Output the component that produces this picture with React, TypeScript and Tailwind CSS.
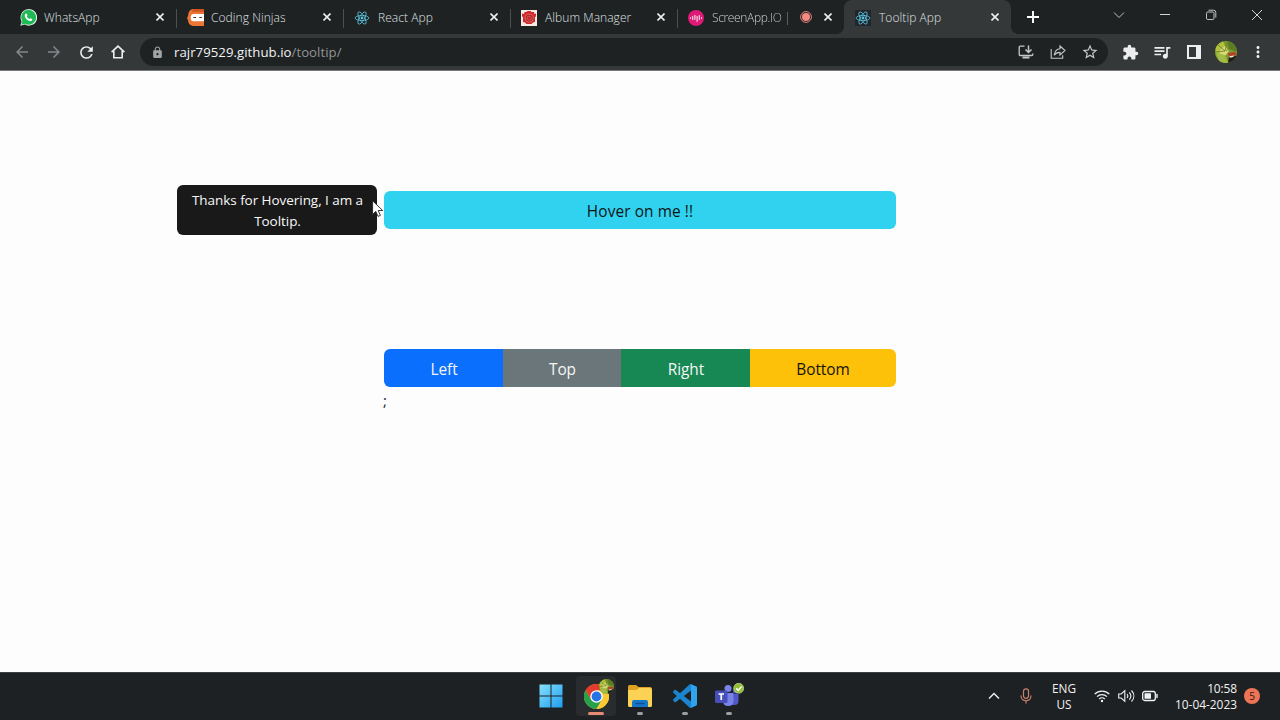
import React from 'react';
import clsx from 'clsx';
import {
  MdArrowBack,
  MdArrowForward,
  MdExtension,
  MdLock,
  MdMoreVert,
  MdQueueMusic,
  MdRefresh,
  MdStarBorder,
} from 'react-icons/md';

/* ---------- favicons ---------- */

function WhatsAppIcon() {
  return (
    <svg viewBox="0 0 16 16" className="h-[17px] w-[17px]">
      <path d="M.3 15.8l1.2-4.1A7.8 7.8 0 1 1 4.5 14.7z" fill="#e9f7ec" />
      <path d="M1.2 14.9l1-3.4A7 7 0 1 1 4.7 13.9z" fill="#1fb955" />
      <path
        d="M5.7 4.3c.3-.1.6 0 .7.3l.6 1.3c.1.3-.5.9-.6 1.1.5 1.1 1.4 1.9 2.6 2.4.3-.2.7-.9 1-.8l1.4.7c.3.2.1 1.5-.6 1.8-2.2 1.2-6.7-2.3-6.3-5.3.1-.7.6-1.4 1.2-1.5z"
        fill="#fff"
      />
    </svg>
  );
}

function NinjasIcon() {
  return (
    <svg viewBox="0 0 16 16" className="h-[17px] w-[17px]">
      <path d="M5.500 0H16v16H5.500Q1 15 1 10.500L0 8.500 1 6.500Q1 1 5.500 0z" fill="#ec7434" />
      <path d="M6 0h10v2.500H4.500z" fill="#cf5520" />
      <path d="M6 4.800h10v6.700H6q-2.500 0-2.500-3.300T6 4.800z" fill="#fff" />
      <path d="M6 8h2.500M11.500 8H14" stroke="#333" strokeWidth="1.100" />
    </svg>
  );
}

function ReactIcon({ dark }: { dark?: boolean }) {
  return (
    <svg viewBox="0 0 16 16" className="h-4 w-4">
      {dark && <rect width="16" height="16" fill="#20262b" />}
      <g fill="none" stroke="#5cc4dc" strokeWidth=".8">
        <ellipse cx="8" cy="8" rx="6.900" ry="2.600" />
        <ellipse cx="8" cy="8" rx="6.900" ry="2.600" transform="rotate(60 8 8)" />
        <ellipse cx="8" cy="8" rx="6.900" ry="2.600" transform="rotate(120 8 8)" />
      </g>
      <circle cx="8" cy="8" r="1.400" fill="#5cc4dc" />
    </svg>
  );
}

function AlbumIcon() {
  return (
    <svg viewBox="0 0 16 16" className="h-4 w-4">
      <rect width="16" height="16" fill="#f6e9e6" />
      <path d="M1 3.500l2 .5.500-2h2l1-1h3l1 1H13l.3 2 1.700-.5v3l-1 .5v5l-2 .5-1.500 1.500h-5L4 12.500l-2-.5V7L1 6.500z" fill="#cf2a2c" />
      <circle cx="8.200" cy="8.200" r="4" fill="#b3181d" stroke="#e99a96" strokeWidth=".6" />
      <circle cx="8.200" cy="8.200" r="2.200" fill="#c9282b" stroke="#e28a87" strokeWidth=".5" />
    </svg>
  );
}

function ScreenAppIcon() {
  return (
    <svg viewBox="0 0 16 16" className="h-4 w-4">
      <circle cx="8" cy="8" r="8" fill="#dd1a75" />
      <path
        d="M2.500 7.700v.6M4.700 6.500v3M6.900 5.300v4M9.100 6.300v5M11.300 5.500v4M13.500 7.700v.6"
        stroke="#fbd3e5"
        strokeWidth="1.200"
        strokeLinecap="round"
      />
    </svg>
  );
}

function Cross({ className }: { className?: string }) {
  return (
    <svg viewBox="0 0 8 8" className={clsx('h-2 w-2 shrink-0', className)}>
      <path d="M.5.5l7 7M7.500.5l-7 7" stroke="currentColor" strokeWidth="1.600" />
    </svg>
  );
}

/* Round profile picture: foliage with a bit of red and white */
function Avatar({ className }: { className?: string }) {
  return (
    <svg viewBox="0 0 22 22" className={className}>
      <defs>
        <clipPath id="avatar-clip">
          <circle cx="11" cy="11" r="11" />
        </clipPath>
      </defs>
      <g clipPath="url(#avatar-clip)">
        <rect width="22" height="22" fill="#7f9a2c" />
        <path d="M0 5l8-5 3 8-9 8z" fill="#b2c23e" />
        <path d="M12 0l10 3v8l-8-3z" fill="#5c7d24" />
        <path d="M5 9l5-4 4 5-4 5-5-2z" fill="#d9d876" />
        <path d="M2 12l8 2 3 8H4z" fill="#a5bb48" />
        <path d="M14 15h8v7h-9z" fill="#1f1d16" />
        <path d="M13 12l7-1 2 3-8 1.500z" fill="#b5402c" />
        <path d="M14 15.300l5-.8-.5 1.500-3.500.8z" fill="#eee4d2" />
        <path d="M3 4l7 6M12 2l-2 8M1 11l9-1M18 4l-7 6" stroke="#5f7b22" strokeWidth=".8" />
      </g>
    </svg>
  );
}

/* ---------- browser chrome ---------- */

const tabs = [
  { title: 'WhatsApp', icon: <WhatsAppIcon /> },
  { title: 'Coding Ninjas', icon: <NinjasIcon /> },
  { title: 'React App', icon: <ReactIcon /> },
  { title: 'Album Manager', icon: <AlbumIcon /> },
  { title: 'ScreenApp.IO |', icon: <ScreenAppIcon />, recording: true },
  { title: 'Tooltip App', icon: <ReactIcon dark />, active: true },
];

function TabStrip() {
  return (
    <div className="flex h-[34px] bg-[#1f2223] pl-[9px]">
      {tabs.map((tab, i) => (
        <div
          key={tab.title}
          className={clsx(
            'relative flex w-[167px] shrink-0 items-center pr-3 pl-[11px]',
            tab.active && 'rounded-t-lg bg-[#353839]'
          )}
        >
          <span className="flex w-[17px] shrink-0 pt-px">{tab.icon}</span>
          <span
            className={clsx(
              'ml-[7px] flex-1 pt-px text-[12px] font-light whitespace-nowrap text-[#dfe1e2]',
              tab.recording
                ? 'bg-[linear-gradient(90deg,#dfe1e2_70%,#85888a_100%)] bg-clip-text tracking-[-0.35px] text-transparent'
                : 'tracking-[0.06px]'
            )}
          >
            {tab.title}
          </span>
          {tab.recording && (
            <svg viewBox="0 0 12 12" className="mr-3 ml-2 h-3 w-3 shrink-0">
              <circle cx="6" cy="6" r="5.400" fill="none" stroke="#e8827b" />
              <circle cx="6" cy="6" r="4" fill="#f28b82" />
            </svg>
          )}
          <Cross className="text-[#eceeef]" />
          {i < 4 && <span className="absolute -right-px h-[19px] w-px translate-y-[1px] bg-[#4b4f51]" />}
          {tab.active && (
            <>
              <span className="absolute bottom-0 -left-2 h-2 w-2 bg-[radial-gradient(circle_at_0_0,#1f2223_8px,#353839_8px)]" />
              <span className="absolute -right-2 bottom-0 h-2 w-2 bg-[radial-gradient(circle_at_100%_0,#1f2223_8px,#353839_8px)]" />
            </>
          )}
        </div>
      ))}
      <svg viewBox="0 0 12 12" className="mt-[11px] ml-4 h-3 w-3">
        <path d="M6 0v12M0 6h12" stroke="#fff" strokeWidth="1.900" />
      </svg>
      <div className="ml-auto flex h-[29px] items-center text-[#d3d5d6]">
        <svg viewBox="0 0 12 12" className="mr-[34px] h-3 w-3" fill="none" stroke="currentColor">
          <path d="M1 3.500l5 5 5-5" strokeWidth=".9" />
        </svg>
        <svg viewBox="0 0 12 12" className="mr-[34px] h-3 w-3" fill="none" stroke="currentColor">
          <path d="M1 5.500h10" />
        </svg>
        <svg viewBox="0 0 12 12" className="mr-[34px] h-3 w-3" fill="none" stroke="currentColor" strokeWidth=".9">
          <rect x="1.500" y="3" width="7.500" height="7.500" rx="1.300" />
          <path d="M3.500 1.200h5a2.300 2.300 0 0 1 2.300 2.300V8.500" />
        </svg>
        <svg viewBox="0 0 12 12" className="mr-[17px] h-3 w-3" fill="none" stroke="currentColor">
          <path d="M1 1l10 10M11 1L1 11" />
        </svg>
      </div>
    </div>
  );
}

function Toolbar() {
  return (
    <div className="flex h-[37px] items-center border-b border-[#77797a] bg-[#353839] pl-[13px] text-[#eceeef]">
      <MdArrowBack className="mr-[14px] h-[18px] w-[18px] text-[#85888a]" />
      <MdArrowForward className="mr-[14px] h-[18px] w-[18px] text-[#85888a]" />
      <MdRefresh className="mr-[15px] h-[19px] w-[19px]" />
      <svg viewBox="0 0 14 14" className="mr-[15px] h-[14px] w-[14px]" fill="none" stroke="currentColor" strokeWidth="1.600">
        <path d="M.6 7.200L7 1.200l6.400 6M2.800 5.700v7.100h8.400V5.700" />
      </svg>
      <div className="flex h-7 w-[968px] items-center rounded-full bg-[#1f2223] pr-[9px] pl-[11px] text-[#c5c8ca]">
        <MdLock className="h-[13px] w-[13px] text-[#a2a5a7]" />
        <span className="ml-[10px] pt-px text-[13.2px] tracking-[0.04px] text-[#f1f2f3]">
          rajr79529.github.io<span className="text-[#909496]">/tooltip/</span>
        </span>
        <svg viewBox="0 0 16 16" className="ml-auto h-4 w-4" fill="none" stroke="currentColor" strokeWidth="1.300">
          <path d="M6.500 2.200H2.200Q1.200 2.200 1.200 3.200v7.300q0 1 1 1H13.800q1 0 1-1V9.500" />
          <path d="M4.500 13.500h7" strokeWidth="2" />
          <path d="M10.500 1.500v6.800M7.500 5.500l3 3 3-3" strokeWidth="1.500" />
        </svg>
        <svg viewBox="0 0 16 16" className="ml-4 h-4 w-4" fill="none" stroke="currentColor" strokeWidth="1.100">
          <path d="M1.200 5v9.300h11.500v-3" />
          <path d="M10 2l5 4.500-5 4.500V8.400c-2.800 0-4.500.7-5.800 2.800C4.700 7.500 6.700 5 10 4.700z" />
        </svg>
        <MdStarBorder className="ml-[15px] h-[18px] w-[18px]" />
      </div>
      <MdExtension className="ml-[14px] h-[17px] w-[17px]" />
      <MdQueueMusic className="ml-[13px] h-5 w-5" />
      <svg viewBox="0 0 14 14" className="ml-[15px] h-[14px] w-[14px]" fill="none" stroke="currentColor">
        <path d="M1 1h12v12H1z" strokeWidth="2" />
        <path d="M11 1v12" strokeWidth="4" />
      </svg>
      <Avatar className="ml-[14px] h-[22px] w-[22px]" />
      <MdMoreVert className="ml-3 h-[18px] w-[18px]" />
    </div>
  );
}

/* ---------- page ---------- */

function TooltipPage() {
  return (
    <main className="flex-1 bg-[#fdfdfd] pt-[120px]">
      <div className="mx-auto w-[512px]">
        <div className="relative">
          <button className="flex h-[38px] w-full items-center justify-center rounded-md bg-[#31d2f0] pt-[3px] text-[15.4px] tracking-[0.1px] text-[#101314]">
            Hover on me !!
          </button>
          <div className="absolute -top-1.5 right-[519px] h-[50px] w-[200px] rounded-md bg-[#191919] py-[5px] pr-[7px] pl-2 text-center text-[13.5px] leading-[20.5px] tracking-[-0.05px] text-[#f8f8f8]">
            Thanks for Hovering, I am a Tooltip.
          </div>
        </div>

        <div className="mt-[120px] flex h-[38px] overflow-hidden rounded-md text-[15.4px] tracking-[-0.05px] text-[#f4f6f6]">
          <button className="w-[119px] bg-[#0b6ffd] pt-[3px] pl-px">Left</button>
          <button className="w-[118px] bg-[#6a7679] pt-[3px] pl-px">Top</button>
          <button className="w-[129px] bg-[#178754] pt-[3px] pl-px">Right</button>
          <button className="w-[146px] bg-[#fcc108] pt-[3px] text-[#15130a]">Bottom</button>
        </div>
        <p className="-ml-px pt-px text-[15px] leading-6 text-[#212529]">;</p>
      </div>
    </main>
  );
}

function Cursor() {
  return (
    <svg viewBox="0 0 12 18" className="absolute top-[200px] left-[372px] h-[18px] w-3">
      <path d="M.6.8v13.600l3.200-3 2.200 5 2.400-1-2.200-4.900h4.500z" fill="#fff" stroke="#222" strokeWidth=".9" />
    </svg>
  );
}

/* ---------- taskbar ---------- */

function WindowsLogo() {
  return (
    <svg viewBox="0 0 24 24" className="h-6 w-6">
      <defs>
        <linearGradient id="win" x1="0" y1="0" x2="1" y2="1">
          <stop offset="0" stopColor="#86e0fb" />
          <stop offset="1" stopColor="#1d9df0" />
        </linearGradient>
      </defs>
      <path d="M.5.500h11v11H.5zM12.500.500h11v11h-11zM.5 12.500h11v11H.5zM12.500 12.500h11v11h-11z" fill="url(#win)" />
    </svg>
  );
}

function ChromeLogo() {
  return (
    <span className="relative flex">
      <svg viewBox="0 0 24 24" className="h-[25px] w-[25px]">
        <circle cx="12" cy="12" r="12" fill="#fcc934" />
        <path d="M1.600 6A12 12 0 0 0 12 24l5.200-9L12 12l-5.200 3z" fill="#27a04b" />
        <path d="M22.400 6A12 12 0 0 1 12 24l5.200-9L16 7z" fill="#fcc934" />
        <path d="M12 6h10.400A12 12 0 0 0 1.600 6l5.200 9z" fill="#e33b2e" />
        <circle cx="12" cy="12" r="6" fill="#fff" />
        <circle cx="12" cy="12" r="4.700" fill="#2673e6" />
      </svg>
      <Avatar className="absolute -top-[5px] -right-[5px] h-[15px] w-[15px]" />
    </span>
  );
}

function FolderLogo() {
  return (
    <svg viewBox="0 0 26 24" className="h-6 w-[26px]">
      <path d="M1 2.500Q1 1 2.500 1H9l2.500 2H23q2 0 2 2v6H1z" fill="#e0a021" />
      <path d="M1 6h8.500l2.500-2h11q2 0 2 2v15.500Q25 23 23.500 23h-21Q1 23 1 21.500z" fill="#fcd254" />
      <path d="M5 23v-5q0-2 2-2h12q2 0 2 2v5z" fill="#1676c8" />
      <path d="M9 19.500h8" stroke="#0c4f92" strokeWidth="1.500" strokeLinecap="round" />
    </svg>
  );
}

function VsCodeLogo() {
  return (
    <svg viewBox="0 0 24 24" className="h-6 w-6">
      <path
        d="M23.150 2.587L18.210.210a1.494 1.494 0 0 0-1.705.290l-9.460 8.630-4.120-3.128a.999.999 0 0 0-1.276.057L.327 7.261A1 1 0 0 0 .326 8.740L3.899 12 .326 15.260a1 1 0 0 0 .001 1.479L1.650 17.940a.999.999 0 0 0 1.276.057l4.120-3.128 9.460 8.630a1.492 1.492 0 0 0 1.704.290l4.942-2.377A1.500 1.500 0 0 0 24 20.060V3.939a1.500 1.500 0 0 0-.850-1.352zm-5.146 14.861L10.826 12l7.178-5.448v10.896z"
        fill="#1b86cf"
      />
      <path d="M18 .3l5.150 2.287A1.500 1.500 0 0 1 24 3.939V20.060a1.500 1.500 0 0 1-.85 1.352L18 23.700z" fill="#2ea3ee" />
    </svg>
  );
}

function TeamsLogo() {
  return (
    <svg viewBox="0 0 30 26" className="h-[26px] w-[30px]">
      <circle cx="14" cy="5.500" r="3.500" fill="#7b83eb" />
      <circle cx="21.500" cy="8" r="2.500" fill="#5059c9" />
      <path d="M17 11h7.500v7q0 4-4 4H17z" fill="#5059c9" />
      <path d="M9 10h10.500v8q0 5-5.250 5T9 18z" fill="#7b83eb" />
      <rect x="1" y="7.500" width="12.500" height="12.500" rx="1.500" fill="#464eb8" />
      <path d="M4.500 11h5.500M7.250 11v6" stroke="#fff" strokeWidth="1.700" />
      <circle cx="24.700" cy="5.300" r="5" fill="#8fbf30" stroke="#dfe9c8" strokeWidth=".6" />
      <path d="M22.200 5.300l2 2 3.500-3.700" fill="none" stroke="#fff" strokeWidth="1.500" />
    </svg>
  );
}

const apps = [
  { name: 'start', logo: <WindowsLogo /> },
  { name: 'chrome', logo: <ChromeLogo />, focused: true },
  { name: 'explorer', logo: <FolderLogo />, open: true },
  { name: 'vscode', logo: <VsCodeLogo />, open: true },
  { name: 'teams', logo: <TeamsLogo />, open: true },
];

function Taskbar() {
  return (
    <footer className="flex h-12 items-center border-t border-[#3b3f41] bg-[#1e2123] pb-px pl-[529px] text-[#f2f2f2]">
      {apps.map((app) => (
        <div key={app.name} className="flex w-[44.5px] justify-center">
          <div
            className={clsx(
              'relative flex h-10 w-10 items-center justify-center rounded',
              app.focused && 'left-[0.5px] bg-[#292c2e]'
            )}
          >
            {app.logo}
            {app.focused && <span className="absolute bottom-px h-[3px] w-4 rounded-full bg-[#e58a74]" />}
            {app.open && <span className="absolute bottom-px h-[3px] w-1.5 rounded-full bg-[#9c9fa0]" />}
          </div>
        </div>
      ))}

      <div className="ml-auto flex items-center pr-5">
        <svg viewBox="0 0 12 12" className="h-3 w-3" fill="none" stroke="currentColor" strokeWidth="1.400">
          <path d="M1 8.500l5-5 5 5" />
        </svg>
        <svg viewBox="0 0 12 16" className="ml-5 h-4 w-3" fill="none" stroke="#c9826c" strokeWidth="1.200">
          <rect x="3.500" y=".8" width="5" height="9.500" rx="2.500" />
          <path d="M1 7.500c0 7 10 7 10 0M6 12.800v2.700" />
        </svg>
        <div className="ml-5 w-6 text-center text-[11.8px] leading-4 whitespace-nowrap">
          <div>ENG</div>
          <div>US</div>
        </div>
        <svg viewBox="0 0 16 14" className="ml-[18px] h-[14px] w-4" fill="none" stroke="currentColor" strokeWidth="1.200">
          <path d="M.7 5.200a10.300 10.300 0 0 1 14.600 0M3 7.700a7 7 0 0 1 10 0M5.200 10a4 4 0 0 1 5.600 0" />
          <circle cx="8" cy="12" r="1.200" fill="currentColor" stroke="none" />
        </svg>
        <svg viewBox="0 0 17 14" className="ml-2 h-[14px] w-[17px]" fill="none" stroke="currentColor" strokeWidth="1.100">
          <path d="M.7 5v4h2.500l3.600 3.300V1.700L3.200 5z" />
          <path d="M9 5c1 1.200 1 2.800 0 4M11.300 3.300c2 2.300 2 5.100 0 7.400M13.500 1.500c3.100 3.300 3.100 7.700 0 11" />
        </svg>
        <svg viewBox="0 0 16 12" className="ml-[7px] h-3 w-4">
          <rect x=".7" y="1.500" width="12.600" height="9" rx="2" fill="none" stroke="currentColor" strokeWidth="1.300" />
          <rect x="2.500" y="3.300" width="6.500" height="5.400" rx=".5" fill="currentColor" />
          <path d="M15 4.500v3" stroke="currentColor" strokeWidth="1.400" strokeLinecap="round" />
        </svg>
        <div className="ml-4 w-[63px] text-right text-[11.9px] leading-4 whitespace-nowrap">
          <div className="tracking-[-0.1px]">10:58</div>
          <div>10-04-2023</div>
        </div>
        <span className="ml-[7px] flex h-4 w-4 items-center justify-center rounded-full bg-[#ee7456] text-[10px] text-[#33150e]">
          5
        </span>
      </div>
    </footer>
  );
}

export default function App() {
  return (
    <div className="relative flex h-[720px] w-[1280px] flex-col overflow-hidden font-['Open_Sans','Noto_Sans',sans-serif]">
      <TabStrip />
      <Toolbar />
      <TooltipPage />
      <Taskbar />
      <Cursor />
    </div>
  );
}
